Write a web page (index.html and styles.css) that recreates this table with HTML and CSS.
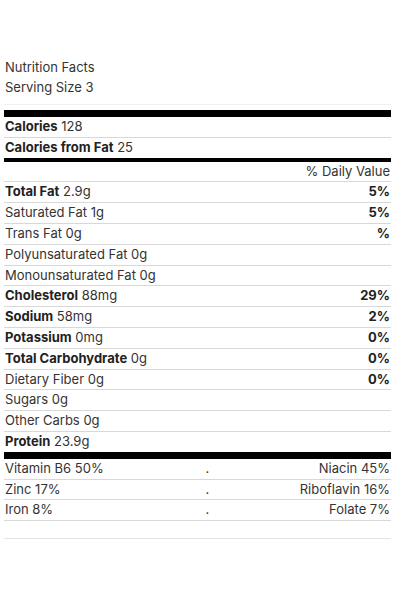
FILE: index.html
```html
<!DOCTYPE html>
<html>
<head>
    <title>Nutrition Facts</title>
    <link rel="stylesheet" href="styles.css">
</head>
<body>
    <div class="label">
        <div class="label-head">
            <div class="row-plain">Nutrition Facts</div>
            <div class="row-plain">Serving Size 3</div>
        </div>

        <!-- Calories -->
        <div class="section thick">
            <div class="row"><span><b>Calories</b> 128</span></div>
            <div class="row last"><span><b>Calories from Fat</b> 25</span></div>
        </div>

        <!-- Nutrients -->
        <div class="section medium">
            <div class="row"><span></span><span class="dv-head">% Daily Value</span></div>
            <div class="row"><span><b>Total Fat</b> 2.9g</span><b>5%</b></div>
            <div class="row"><span>Saturated Fat 1g</span><b>5%</b></div>
            <div class="row"><span>Trans Fat 0g</span><b>%</b></div>
            <div class="row"><span>Polyunsaturated Fat 0g</span></div>
            <div class="row"><span>Monounsaturated Fat 0g</span></div>
            <div class="row"><span><b>Cholesterol</b> 88mg</span><b>29%</b></div>
            <div class="row"><span><b>Sodium</b> 58mg</span><b>2%</b></div>
            <div class="row"><span><b>Potassium</b> 0mg</span><b>0%</b></div>
            <div class="row"><span><b>Total Carbohydrate</b> 0g</span><b>0%</b></div>
            <div class="row"><span>Dietary Fiber 0g</span><b>0%</b></div>
            <div class="row"><span>Sugars 0g</span></div>
            <div class="row"><span>Other Carbs 0g</span></div>
            <div class="row last"><span><b>Protein</b> 23.9g</span></div>
        </div>

        <!-- Vitamins -->
        <div class="section thick">
            <div class="vit-row"><span>Vitamin B6 50%</span><span class="vit-right"><span>.</span><span>Niacin 45%</span></span></div>
            <div class="vit-row"><span>Zinc 17%</span><span class="vit-right"><span>.</span><span>Riboflavin 16%</span></span></div>
            <div class="vit-row"><span>Iron 8%</span><span class="vit-right"><span>.</span><span>Folate 7%</span></span></div>
            <div class="foot"></div>
        </div>
    </div>
</body>
</html>
```

FILE: styles.css
```css
body {
    font-family: Inter, "Noto Sans", sans-serif;
    font-size: 13px;
    margin: 0;
    padding: 0;
    background-color: #fff;
    color: #333;
}

b {
    font-weight: 700;
    color: #222;
}

.label {
    margin: 57px 9px 0 4px;
}

.label-head {
    padding-left: 1px;
    padding-bottom: 7px;
    border-bottom: 1px solid #f0f0f0;
    margin-bottom: 5px;
}

.row-plain {
    line-height: 20px;
}

.section.thick {
    border-top: 7px solid #000;
}

.section.medium {
    border-top: 4px solid #000;
}

.row, .vit-row {
    display: flex;
    justify-content: space-between;
    line-height: 19.8px;
    padding: 0 1px;
    border-bottom: 1px solid #d8d8d8;
}

.row.last {
    border-bottom: 0;
}

.dv-head {
    color: #333;
}

.vit-row {
    display: grid;
    grid-template-columns: 1fr 1fr;
}

.vit-right {
    display: flex;
    justify-content: space-between;
    padding-left: 8px;
}

.foot {
    height: 17px;
    border-bottom: 1px solid #e4e4e4;
}
```
